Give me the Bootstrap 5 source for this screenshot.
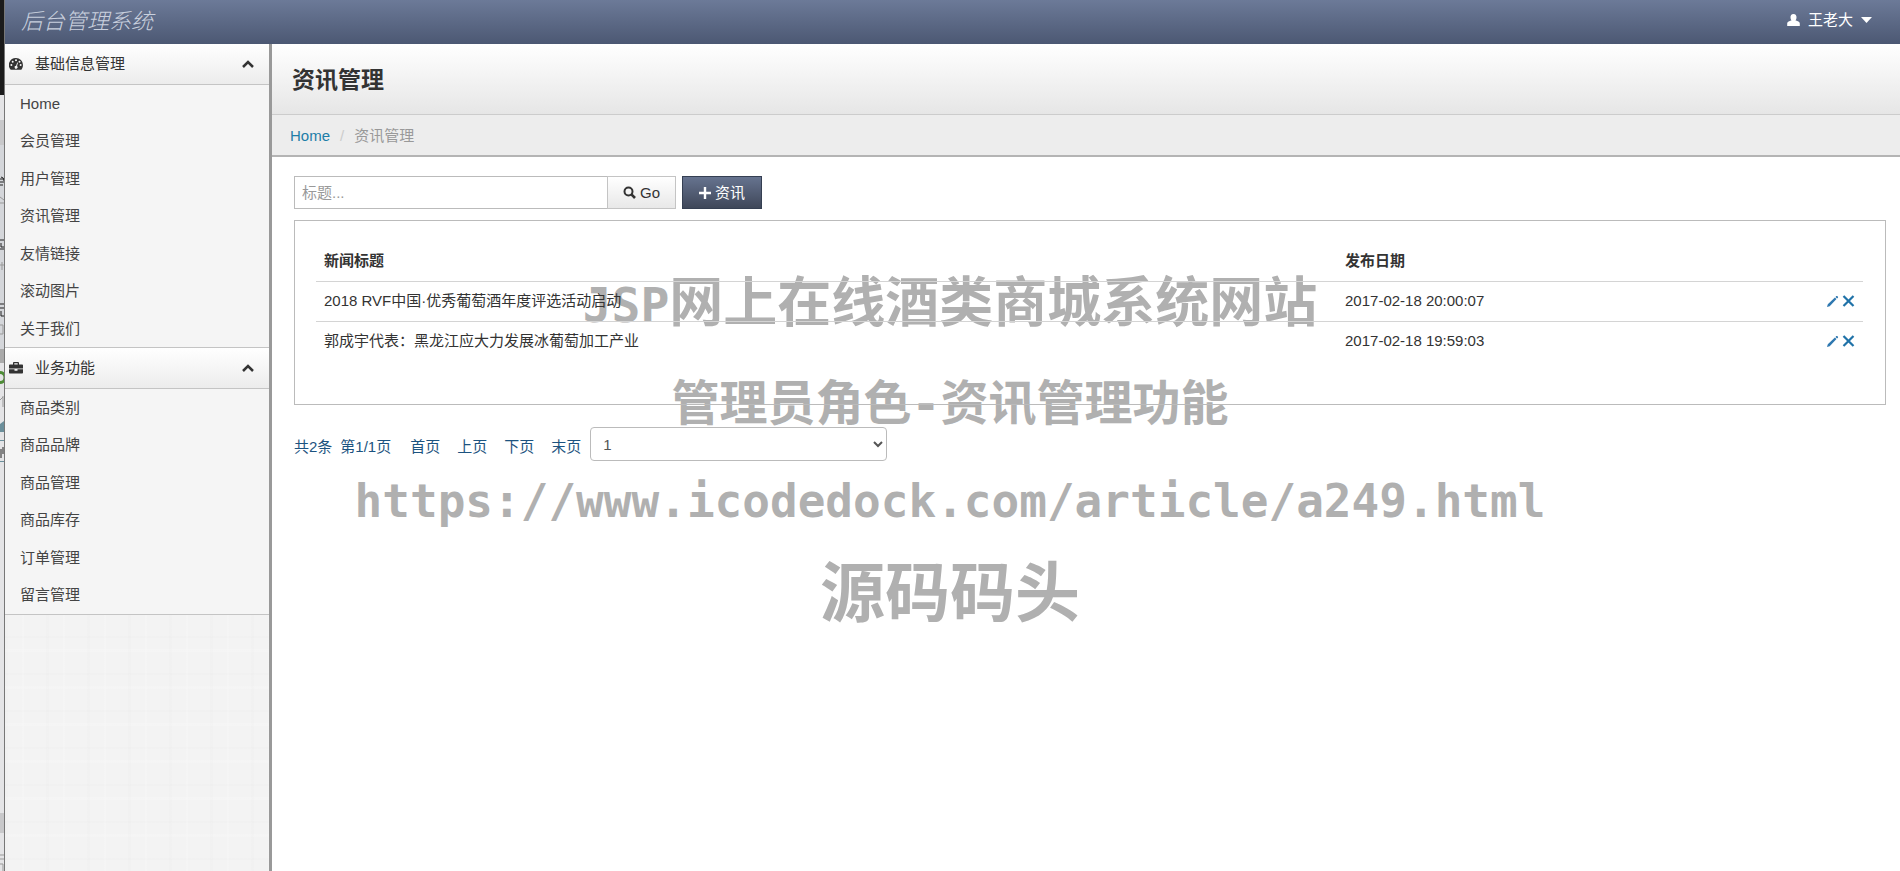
<!DOCTYPE html>
<html lang="zh-CN">
<head>
<meta charset="utf-8">
<meta name="viewport" content="width=device-width, initial-scale=1">
<title>后台管理系统</title>
<link rel="stylesheet" href="https://cdn.jsdelivr.net/npm/bootstrap@5.3.0/dist/css/bootstrap.min.css">
<style>
  body { font: 15px/20px "Liberation Sans", "Noto Sans CJK SC", sans-serif; color: #333; background: #fff; }
  a { text-decoration: none; }
  svg { display: block; flex: none; }
  .edge { flex: 0 0 5px; overflow: hidden; background: #e4e4e6; border-right: 1px solid #777; }
  .topbar { height: 44px; background: linear-gradient(#6c7a98, #4c5873); }
  .topbar .navbar-brand { font-size: 22px; line-height: 24px; font-style: italic; font-weight: 300; color: #c9d0de; }
  .topbar .nav-link { color: #fff; font-size: 15px; padding-bottom: 4px; }
  .side { flex: 0 0 267px; border-right: 3px solid #999; background-color: #f3f3f3;
    background-image: repeating-linear-gradient(90deg, rgba(0,0,0,.006) 0 3px, transparent 3px 17px, rgba(255,255,255,.15) 17px 19px, transparent 19px 41px),
      repeating-linear-gradient(rgba(0,0,0,.006) 0 2px, transparent 2px 13px, rgba(255,255,255,.15) 13px 16px, transparent 16px 37px); }
  .group-head { height: 41px; padding: 0 14px 0 4px; background: linear-gradient(#fff, #ececec); border: 0; border-bottom: 1px solid #c4c4c4; color: #333; width: 100%; text-align: left; }
  .group-list { background: #f5f5f5; border-bottom: 1px solid #c4c4c4; }
  .group-list a { color: #444; height: 37px; padding: 8px 15px; line-height: 22px; display: block; }
  .group-list li:nth-child(even) a { height: 38px; }
  .title-bar { height: 71px; padding: 2px 0 0 20px; background: linear-gradient(#fff, #e6e6e6); border-bottom: 1px solid #ccc; }
  .title-bar h1 { font-size: 23px; line-height: 28px; font-weight: 700; margin: 0; }
  .crumbs { height: 42px; padding: 2px 0 0 18px; background: #ededed; border-bottom: 2px solid #b4b4b4; }
  .crumbs .breadcrumb { --bs-breadcrumb-divider-color: #ccc; --bs-breadcrumb-item-padding-x: 10px; --bs-breadcrumb-item-active-color: #999; }
  .crumbs a { color: #1d7ea8; }
  .body-pad { padding: 19px 14px 0 22px; position: relative; z-index: 1; }
  .body-pad .form-control { width: 314px; height: 33px; border: 1px solid #bbb; border-radius: 0; padding: 4px 7px; font-size: 15px; line-height: 20px; background: #fff; }
  .body-pad .form-control::placeholder { color: #999; }
  .body-pad .btn { height: 33px; border-radius: 0; padding: 0 15px; font-size: 15px; line-height: 20px; }
  .body-pad .btn-go { border: 1px solid #c4c4c4; margin-left: -1px; color: #333; background: linear-gradient(#fff, #e8e8e8); }
  .body-pad .btn-new { border: 1px solid #353f52; margin-left: 6px; padding: 0 16px; color: #fff; background: linear-gradient(#66738f, #3f4759); }
  .panel { border: 1px solid #bbb; margin-top: 11px; padding: 20px 22px 43px 21px; }
  .panel .table { --bs-table-bg: transparent; --bs-table-color: #333; margin: 0; table-layout: fixed; }
  .panel .table th, .panel .table td { padding: 9px 8px 10px; border-bottom: 0; border-top: 1px solid #d4d4d4; line-height: 20px; }
  .panel .table thead th { border-top: 0; padding-top: 10px; }
  .c-title { width: 66%; }
  .c-act { width: 56px; }
  .acts { gap: 3px; }
  .pager { margin-top: 22px; color: #1c5380; }
  .pager-text { padding-top: 6px; }
  .pager-links { gap: 17px; margin: 0 9px 0 19px; }
  .pager a { color: #1c5380; }
  .pager .form-select { width: 297px; height: 34px; border: 1px solid #bbb; border-radius: 4px; padding: 4px 24px 4px 8px; font-size: 15px; line-height: 20px; color: #555; background: #fff; appearance: auto; }
  .wm { inset: 0; pointer-events: none; padding-top: 264px; color: #b0b0b0; font-family: "Liberation Sans", "Noto Sans CJK SC", sans-serif; font-weight: 700; text-align: center; white-space: nowrap; }
  .wm span, .wm-url { font-family: "DejaVu Sans Mono", monospace; }
  .wm-site { font-size: 54px; line-height: 78px; }
  .wm-site span { font-size: 48px; }
  .wm-role { font-size: 48px; line-height: 70px; margin-top: 24px; }
  .wm-url { font-size: 46px; line-height: 56px; margin-top: 34px; }
  .wm-owner { font-size: 65px; line-height: 92px; margin-top: 19px; }
</style>
</head>
<body>
<div class="d-flex min-vh-100 position-relative">
  <div class="edge" aria-hidden="true">
    <svg width="4" height="871" viewBox="0 0 4 871">
      <path fill="#1b1b1b" d="M0 0h4v95H0z"/>
      <path fill="#c8c8ca" d="M0 120h4v25H0zM0 813h4v20H0z"/>
      <path fill="#d4d6da" d="M0 145h4v205H0z"/>
      <path fill="#aaa" d="M0 349h4v14H0z"/>
      <path fill="none" stroke="#222" d="M0 179h3M0 182h4M1 177q3 0 3 4M0 185h3M0 240h4M1 243v4h3M0 249h4M0 304h4M0 308h4M1 311v5h3M3 447v7M1 449v9"/>
      <path fill="none" stroke="#999" d="M0 197l4 3M0 203h4M2 262v8M0 265h4M0 325h3v9H0M0 400l3-3M3 396v11M0 855h4M0 859h4M0 864h3v7"/>
      <path fill="#4d8c36" d="M0 371a6 6 0 0 1 0 13v-3a3 3 0 0 0 0-7z"/>
      <path fill="#6b8f9b" d="M0 424l4-3v11H0zM0 440h4v1H0zM0 461h4v1H0z"/>
    </svg>
  </div>
  <div class="flex-grow-1 d-flex flex-column">
    <nav class="topbar d-flex align-items-center justify-content-between">
      <a class="navbar-brand ms-3 mb-1 pt-1" href="#">后台管理系统</a>
      <a class="nav-link d-flex align-items-center me-4 pe-1" href="#">
        <svg width="13" height="12" viewBox="0 0 13 12" fill="currentColor"><path d="M6.500 0C8.600 0 9.700 1.600 9.500 3.700 9.400 5.200 8.800 6 8.400 6.300l3 1.300c1.100.5 1.400 1.200 1.400 2.200V12H.2V9.800c0-1 .3-1.700 1.400-2.200l3-1.300C4.200 6 3.600 5.200 3.500 3.700 3.300 1.600 4.400 0 6.500 0z"/></svg>
        <span class="mx-2">王老大</span>
        <svg width="11" height="6" viewBox="0 0 11 6" fill="currentColor"><path d="M0 0h11L5.500 6z"/></svg>
      </a>
    </nav>
    <div class="flex-grow-1 d-flex">
      <aside class="side">
        <button class="group-head d-flex align-items-center" type="button">
          <svg width="14" height="12" viewBox="0 0 14 12"><path d="M7 0a7 7 0 0 1 7 7c0 1.800-.6 3.500-1.700 4.700H1.700A7 7 0 0 1 7 0z" fill="#333"/><g fill="#f5f5f5"><circle cx="2.400" cy="7" r="1"/><circle cx="3.700" cy="3.700" r="1"/><circle cx="7" cy="2.300" r="1"/><circle cx="11.600" cy="7" r="1"/><circle cx="10.500" cy="3.700" r="1"/><path d="M8.200 4.500l.8.300-1 3.200a1.500 1.500 0 1 1-.9-.3z"/></g></svg>
          <span class="ms-2 ps-1 flex-grow-1">基础信息管理</span>
          <svg width="14" height="8" viewBox="0 0 14 8" fill="none" stroke="#333" stroke-width="2.500"><path d="M2 7l5-5 5 5"/></svg>
        </button>
        <ul class="group-list list-unstyled mb-0">
          <li><a href="#">Home</a></li>
          <li><a href="#">会员管理</a></li>
          <li><a href="#">用户管理</a></li>
          <li><a href="#">资讯管理</a></li>
          <li><a href="#">友情链接</a></li>
          <li><a href="#">滚动图片</a></li>
          <li><a href="#">关于我们</a></li>
        </ul>
        <button class="group-head d-flex align-items-center" type="button">
          <svg width="14" height="12" viewBox="0 0 14 12" fill="#333"><path fill-rule="evenodd" d="M4 2.500V1.200C4 .5 4.400 0 5.100 0h3.800c.7 0 1.100.5 1.100 1.200v1.300h3c.6 0 1 .4 1 1v3H0v-3c0-.6.400-1 1-1zm1.300 0h3.400v-1.200H5.300zM0 7.300h5.500v1.400h3V7.300H14v3.200c0 .6-.4 1-1 1H1c-.6 0-1-.4-1-1z"/></svg>
          <span class="ms-2 ps-1 flex-grow-1">业务功能</span>
          <svg width="14" height="8" viewBox="0 0 14 8" fill="none" stroke="#333" stroke-width="2.500"><path d="M2 7l5-5 5 5"/></svg>
        </button>
        <ul class="group-list list-unstyled mb-0">
          <li><a href="#">商品类别</a></li>
          <li><a href="#">商品品牌</a></li>
          <li><a href="#">商品管理</a></li>
          <li><a href="#">商品库存</a></li>
          <li><a href="#">订单管理</a></li>
          <li><a href="#">留言管理</a></li>
        </ul>
      </aside>
      <main class="flex-grow-1">
        <div class="title-bar d-flex align-items-center"><h1>资讯管理</h1></div>
        <nav class="crumbs d-flex align-items-center" aria-label="breadcrumb">
          <ol class="breadcrumb mb-0">
            <li class="breadcrumb-item"><a href="#">Home</a></li>
            <li class="breadcrumb-item active" aria-current="page">资讯管理</li>
          </ol>
        </nav>
        <div class="body-pad">
          <form class="d-flex">
            <input class="form-control" type="text" placeholder="标题..." aria-label="标题">
            <button class="btn btn-go d-flex align-items-center" type="button">
              <svg class="me-1" width="13" height="13" viewBox="0 0 13 13" fill="none" stroke="#333" stroke-width="2"><circle cx="5.500" cy="5.500" r="4"/><path d="M8.400 8.400l3.600 3.600" stroke-width="2.600"/></svg>Go</button>
            <button class="btn btn-new d-flex align-items-center" type="button">
              <svg class="me-1" width="12" height="12" viewBox="0 0 12 12" stroke="#fff" stroke-width="2.400"><path d="M6 0v12M0 6h12"/></svg>资讯</button>
          </form>
          <div class="panel">
            <table class="table">
              <colgroup><col class="c-title"><col><col class="c-act"></colgroup>
              <thead><tr><th>新闻标题</th><th>发布日期</th><th></th></tr></thead>
              <tbody>
                <tr><td>2018 RVF中国·优秀葡萄酒年度评选活动启动</td><td>2017-02-18 20:00:07</td><td><div class="acts d-flex justify-content-end align-items-center">
                  <a href="#" aria-label="编辑"><svg width="13" height="13" viewBox="0 0 13 13" fill="#2f78b0"><path d="M1 12l.8-2.700L8.900 2.500l1.600 1.600L3.700 11.200zM9.500 1.900l.8-.8c.3-.3.7-.3 1 0l.6.6c.3.3.3.7 0 1l-.8.8z"/></svg></a>
                  <a href="#" aria-label="删除"><svg width="13" height="20" viewBox="0 0 13 20" fill="none" stroke="#1f72a8" stroke-width="2.200"><path d="M1.500 5l10 10M11.500 5l-10 10"/></svg></a></div></td></tr>
                <tr><td>郭成宇代表：黑龙江应大力发展冰葡萄加工产业</td><td>2017-02-18 19:59:03</td><td><div class="acts d-flex justify-content-end align-items-center">
                  <a href="#" aria-label="编辑"><svg width="13" height="13" viewBox="0 0 13 13" fill="#2f78b0"><path d="M1 12l.8-2.700L8.900 2.500l1.600 1.600L3.700 11.200zM9.500 1.900l.8-.8c.3-.3.7-.3 1 0l.6.6c.3.3.3.7 0 1l-.8.8z"/></svg></a>
                  <a href="#" aria-label="删除"><svg width="13" height="20" viewBox="0 0 13 20" fill="none" stroke="#1f72a8" stroke-width="2.200"><path d="M1.500 5l10 10M11.500 5l-10 10"/></svg></a></div></td></tr>
              </tbody>
            </table>
          </div>
          <div class="pager d-flex align-items-center">
            <div class="pager-text d-flex">
              <span class="me-2">共2条</span><span>第1/1页</span>
              <div class="pager-links d-flex"><a href="#">首页</a><a href="#">上页</a><a href="#">下页</a><a href="#">末页</a></div>
            </div>
            <select class="form-select" aria-label="页码"><option>1</option></select>
          </div>
        </div>
      </main>
    </div>
  </div>
  <div class="wm position-absolute">
    <div class="wm-site"><span>JSP</span>网上在线酒类商城系统网站</div>
    <div class="wm-role">管理员角色<span>-</span>资讯管理功能</div>
    <div class="wm-url">https://www.icodedock.com/article/a249.html</div>
    <div class="wm-owner">源码码头</div>
  </div>
</div>
<script src="https://cdn.jsdelivr.net/npm/bootstrap@5.3.0/dist/js/bootstrap.bundle.min.js"></script>
</body>
</html>
